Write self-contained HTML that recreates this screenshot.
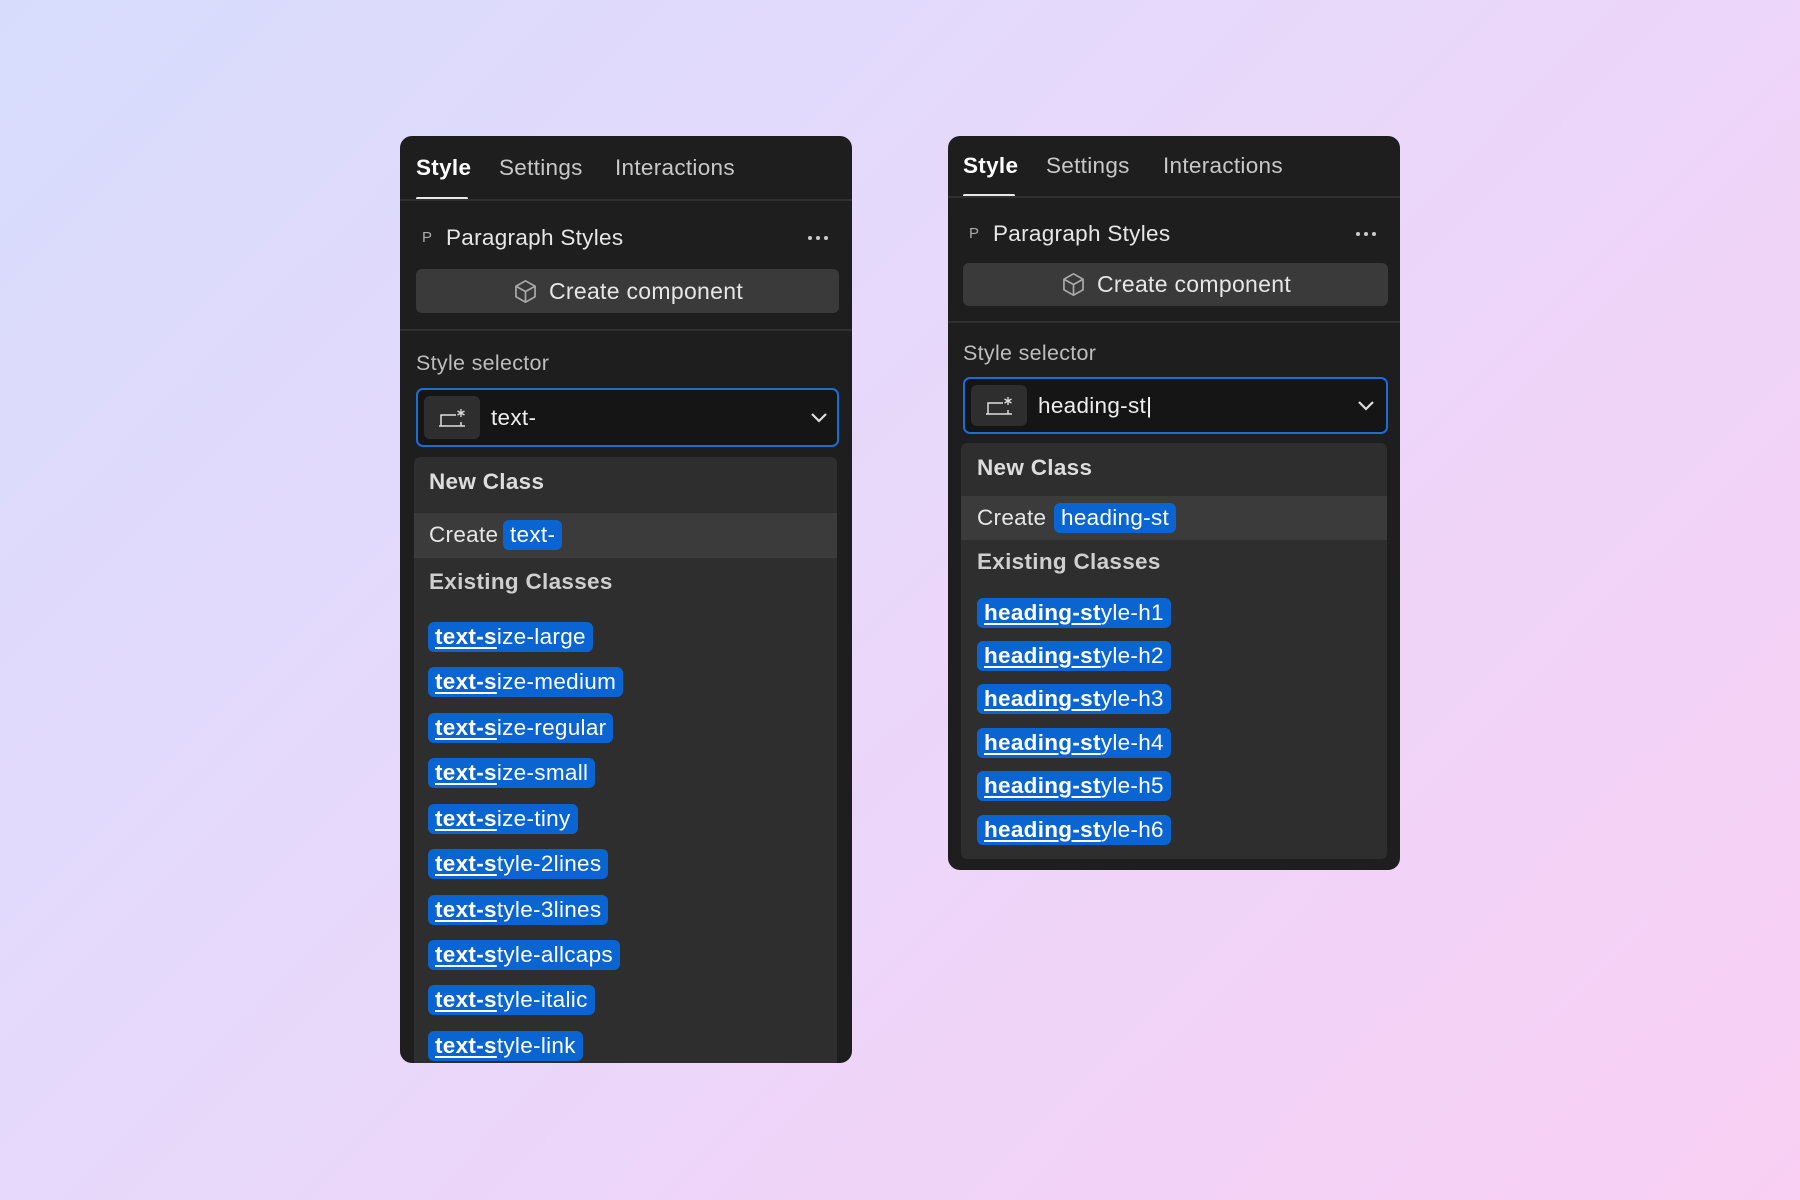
<!DOCTYPE html>
<html><head><meta charset="utf-8"><style>
*{margin:0;padding:0;box-sizing:border-box}
body{width:1800px;height:1200px;overflow:hidden;position:relative;font-family:"Liberation Sans",sans-serif;letter-spacing:0.3px;
background:linear-gradient(135deg,#d7dcfd 0%,#e6d9fb 40%,#f0d4f8 70%,#f9cff4 100%);}
.a{position:absolute}
.panel{position:absolute;background:#1e1e1e;border-radius:12px;overflow:hidden}
.tab{position:absolute;font-size:22.5px;color:#c8c8c8;line-height:26px;white-space:nowrap}
.tab.on{color:#fff;font-weight:bold}
.t{position:absolute;white-space:nowrap;line-height:26px}
.div{position:absolute;left:0;right:0;height:2px;background:#303030}
.btn{position:absolute;background:#3a3a3a;border-radius:6px;color:#e6e6e6;font-size:23px;display:flex;align-items:center;justify-content:center;gap:10px}
.inp{position:absolute;border:2px solid #1a6fd6;border-radius:7px;background:#151515}
.ib{position:absolute;left:6px;top:6px;bottom:6px;width:56px;background:#2e2e2e;border-radius:6px}
.dd{position:absolute;background:#2e2e2e;border-radius:6px}
.chip{position:absolute;height:30px;background:#0a64d2;border-radius:6px;color:#fff;font-size:22.5px;line-height:30px;padding:0 7px;white-space:nowrap}
.chip b{text-decoration:underline;text-underline-offset:3px}
.dots{position:absolute;display:flex;gap:4px}
.dots i{width:4px;height:4px;border-radius:50%;background:#ccc;display:block}
</style></head><body>

<!-- LEFT PANEL -->
<div class="panel" style="left:400px;top:136px;width:452px;height:927px">
  <div class="tab on" style="left:16px;top:19px">Style</div>
  <div class="tab" style="left:99px;top:19px">Settings</div>
  <div class="tab" style="left:215px;top:19px">Interactions</div>
  <div class="a" style="left:16px;top:61px;width:52px;height:3px;background:#e8e8e8;border-radius:2px"></div>
  <div class="div" style="top:63px"></div>
  <div class="t" style="left:22px;top:89px;font-size:15px;color:#aaa">P</div>
  <div class="t" style="left:46px;top:89px;font-size:22.5px;color:#e6e6e6">Paragraph Styles</div>
  <div class="dots" style="left:408px;top:100px"><i></i><i></i><i></i></div>
  <div class="btn" style="left:16px;top:133px;width:423px;height:44px">
    <svg width="27" height="27" viewBox="0 0 24 24" fill="none" stroke="#aaa" stroke-width="1.5" stroke-linejoin="round"><path d="M12 2.5l8.5 4.8v9.4L12 21.5l-8.5-4.8V7.3z M3.5 7.3L12 12l8.5-4.7 M12 12v9.5"/></svg>
    <span>Create component</span></div>
  <div class="div" style="top:193px"></div>
  <div class="t" style="left:16px;top:214px;font-size:21.5px;color:#bdbdbd">Style selector</div>
  <div class="inp" style="left:16px;top:252px;width:423px;height:59px">
    <div class="ib"><svg class="a" style="left:13px;top:11px" width="30" height="24" viewBox="0 0 30 24" fill="none" stroke="#ddd" stroke-width="1.5"><path d="M4 19V8h15 M2 19h26 M24 19v-4"/><path d="M24 2v8 M20.5 4l7 4 M27.5 4l-7 4" stroke-width="1.3"/></svg></div>
    <div class="t" style="left:73px;top:15px;font-size:22.5px;color:#eee">text-</div>
    <svg class="a" style="left:392px;top:20px" width="18" height="14" viewBox="0 0 18 14" fill="none" stroke="#ddd" stroke-width="2.2"><path d="M2 4l7 7 7-7"/></svg>
  </div>
  <div class="dd" style="left:14px;top:321px;width:423px;height:620px">
    <div class="t" style="left:15px;top:12px;font-size:22.5px;color:#ddd;font-weight:bold">New Class</div>
    <div class="a" style="left:0;right:0;top:56px;height:45px;background:#3b3b3b"></div>
    <div class="t" style="left:15px;top:65px;font-size:22.5px;color:#e6e6e6">Create</div>
    <div class="chip" style="left:89px;top:63px">text-</div>
    <div class="t" style="left:15px;top:112px;font-size:22.5px;color:#cfcfcf;font-weight:bold">Existing Classes</div>
    <div class="chip" style="left:14px;top:165px"><b>text-s</b>ize-large</div>
    <div class="chip" style="left:14px;top:210px"><b>text-s</b>ize-medium</div>
    <div class="chip" style="left:14px;top:256px"><b>text-s</b>ize-regular</div>
    <div class="chip" style="left:14px;top:301px"><b>text-s</b>ize-small</div>
    <div class="chip" style="left:14px;top:347px"><b>text-s</b>ize-tiny</div>
    <div class="chip" style="left:14px;top:392px"><b>text-s</b>tyle-2lines</div>
    <div class="chip" style="left:14px;top:438px"><b>text-s</b>tyle-3lines</div>
    <div class="chip" style="left:14px;top:483px"><b>text-s</b>tyle-allcaps</div>
    <div class="chip" style="left:14px;top:528px"><b>text-s</b>tyle-italic</div>
    <div class="chip" style="left:14px;top:574px"><b>text-s</b>tyle-link</div>
  </div>
</div>

<!-- RIGHT PANEL -->
<div class="panel" style="left:948px;top:136px;width:452px;height:734px">
  <div class="tab on" style="left:15px;top:17px">Style</div>
  <div class="tab" style="left:98px;top:17px">Settings</div>
  <div class="tab" style="left:215px;top:17px">Interactions</div>
  <div class="a" style="left:15px;top:58px;width:52px;height:3px;background:#e8e8e8;border-radius:2px"></div>
  <div class="div" style="top:60px"></div>
  <div class="t" style="left:21px;top:85px;font-size:15px;color:#aaa">P</div>
  <div class="t" style="left:45px;top:85px;font-size:22.5px;color:#e6e6e6">Paragraph Styles</div>
  <div class="dots" style="left:408px;top:96px"><i></i><i></i><i></i></div>
  <div class="btn" style="left:15px;top:127px;width:425px;height:43px">
    <svg width="27" height="27" viewBox="0 0 24 24" fill="none" stroke="#aaa" stroke-width="1.5" stroke-linejoin="round"><path d="M12 2.5l8.5 4.8v9.4L12 21.5l-8.5-4.8V7.3z M3.5 7.3L12 12l8.5-4.7 M12 12v9.5"/></svg>
    <span>Create component</span></div>
  <div class="div" style="top:185px"></div>
  <div class="t" style="left:15px;top:204px;font-size:21.5px;color:#bdbdbd">Style selector</div>
  <div class="inp" style="left:15px;top:241px;width:425px;height:57px">
    <div class="ib"><svg class="a" style="left:13px;top:10px" width="30" height="24" viewBox="0 0 30 24" fill="none" stroke="#ddd" stroke-width="1.5"><path d="M4 19V8h15 M2 19h26 M24 19v-4"/><path d="M24 2v8 M20.5 4l7 4 M27.5 4l-7 4" stroke-width="1.3"/></svg></div>
    <div class="t" style="left:73px;top:14px;font-size:22.5px;color:#eee">heading-st<span style="color:#fff;font-weight:100">|</span></div>
    <svg class="a" style="left:392px;top:19px" width="18" height="14" viewBox="0 0 18 14" fill="none" stroke="#ddd" stroke-width="2.2"><path d="M2 4l7 7 7-7"/></svg>
  </div>
  <div class="dd" style="left:13px;top:307px;width:426px;height:416px">
    <div class="t" style="left:16px;top:12px;font-size:22.5px;color:#ddd;font-weight:bold">New Class</div>
    <div class="a" style="left:0;right:0;top:53px;height:44px;background:#3b3b3b"></div>
    <div class="t" style="left:16px;top:62px;font-size:22.5px;color:#e6e6e6">Create</div>
    <div class="chip" style="left:93px;top:60px">heading-st</div>
    <div class="t" style="left:16px;top:106px;font-size:22.5px;color:#cfcfcf;font-weight:bold">Existing Classes</div>
    <div class="chip" style="left:16px;top:155px"><b>heading-st</b>yle-h1</div>
    <div class="chip" style="left:16px;top:198px"><b>heading-st</b>yle-h2</div>
    <div class="chip" style="left:16px;top:241px"><b>heading-st</b>yle-h3</div>
    <div class="chip" style="left:16px;top:285px"><b>heading-st</b>yle-h4</div>
    <div class="chip" style="left:16px;top:328px"><b>heading-st</b>yle-h5</div>
    <div class="chip" style="left:16px;top:372px"><b>heading-st</b>yle-h6</div>
  </div>
</div>
</body></html>
